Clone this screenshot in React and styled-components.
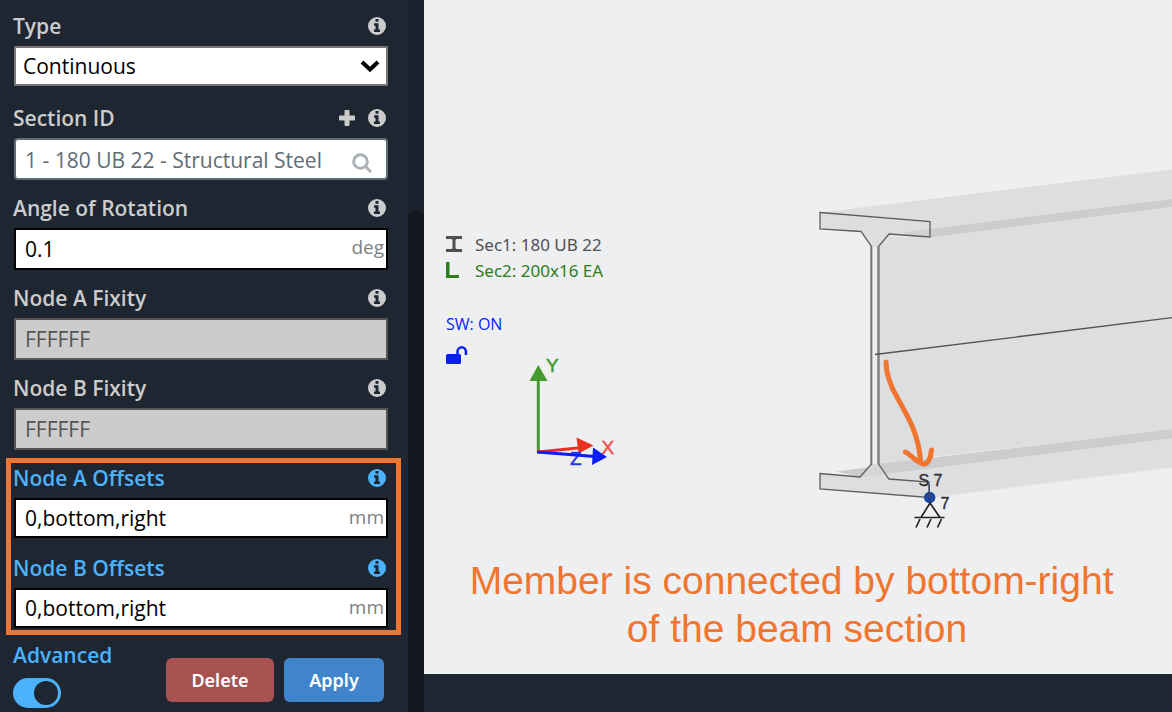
import { useState } from "react";
import styled, { createGlobalStyle } from "styled-components";

export default function App() {
  const [advanced, setAdvanced] = useState(true);

  return (
    <>
      <GlobalStyle />
      <Page>
        <Sidebar>
          <Form onSubmit={(e) => e.preventDefault()}>
            <Field $tall>
              <FieldHeader>
                <Label htmlFor="type">Type</Label>
                <InfoButton name="Type" />
              </FieldHeader>
              <Control>
                <Select id="type" defaultValue="Continuous">
                  <option>Continuous</option>
                  <option>Cable</option>
                  <option>Rigid</option>
                </Select>
                <SelectArrow viewBox="0 0 20 14" aria-hidden="true">
                  <path d="M2 3l8 7.5L18 3" />
                </SelectArrow>
              </Control>
            </Field>

            <Field>
              <FieldHeader>
                <Label htmlFor="section">Section ID</Label>
                <Actions>
                  <IconButton type="button" aria-label="Add section">
                    <Icon viewBox="0 0 18 18">
                      <path d="M7.5 1h3q1 0 1 1v4.500H16q1 0 1 1v3q0 1-1 1h-4.500V16q0 1-1 1h-3q-1 0-1-1v-4.500H2q-1 0-1-1v-3q0-1 1-1h4.500V2q0-1 1-1z" />
                    </Icon>
                  </IconButton>
                  <InfoButton name="Section ID" />
                </Actions>
              </FieldHeader>
              <Control>
                <SearchInput
                  id="section"
                  defaultValue="1 - 180 UB 22 - Structural Steel"
                />
                <SearchIcon viewBox="0 0 20 20" aria-hidden="true">
                  <circle cx="8.500" cy="8.500" r="6.800" />
                  <path d="M13.500 13.500L19 19" />
                </SearchIcon>
              </Control>
            </Field>

            <TextField id="angle" label="Angle of Rotation" value="0.1" unit="deg" />
            <TextField id="fixityA" label="Node A Fixity" value="FFFFFF" disabled />
            <TextField id="fixityB" label="Node B Fixity" value="FFFFFF" disabled />

            <Highlight>
              <TextField id="offsetA" label="Node A Offsets" value="0,bottom,right" unit="mm" active />
              <TextField id="offsetB" label="Node B Offsets" value="0,bottom,right" unit="mm" active />
            </Highlight>

            <FormFooter>
              <Advanced>
                <Label htmlFor="advanced" $active>Advanced</Label>
                <Toggle
                  id="advanced"
                  type="checkbox"
                  checked={advanced}
                  onChange={() => setAdvanced(!advanced)}
                />
              </Advanced>
              <Buttons>
                <DeleteButton type="button">Delete</DeleteButton>
                <ApplyButton type="submit">Apply</ApplyButton>
              </Buttons>
            </FormFooter>
          </Form>
          <ScrollTrack>
            <ScrollThumb />
          </ScrollTrack>
        </Sidebar>

        <Main>
          <Viewport>
            <Model />
            <Legend>
              <LegendRow>
                <LegendIcon viewBox="0 0 16 16">
                  <path d="M0 0h16v3h-5q-1.500 0-1.500 1.500v7q0 1.500 1.500 1.500h5v3H0v-3h5q1.500 0 1.500-1.500v-7Q6.500 3 5 3H0z" />
                </LegendIcon>
                Sec1: 180 UB 22
              </LegendRow>
              <LegendRow $color="#2f7d1b">
                <LegendIcon viewBox="0 0 16 16">
                  <path d="M0 0h3.500v13H13v3H0z" />
                </LegendIcon>
                Sec2: 200x16 EA
              </LegendRow>
            </Legend>
            <SelfWeight>
              SW: ON
              <LockIcon viewBox="0 0 22 18">
                <rect x="0" y="8" width="15" height="10" rx="1.500" />
                <path d="M11.500 9V5.500a4.200 4.200 0 0 1 8.400 0V9" />
              </LockIcon>
            </SelfWeight>
            <Caption>
              Member is connected by bottom-right&nbsp;
              <br />
              of the beam section
            </Caption>
          </Viewport>
          <BottomBar />
        </Main>
      </Page>
    </>
  );
}

function InfoButton({ name, active }) {
  return (
    <IconButton type="button" aria-label={`About ${name}`} $active={active}>
      <Icon viewBox="0 0 18 18">
        <path
          fillRule="evenodd"
          d="M9 0a9 9 0 1 0 0 18A9 9 0 1 0 9 0zM7.500 2h3v2.700h-3zM6 6.300h4.500v6.200H12v2.500H6v-2.500h1.500V8.800H6z"
        />
      </Icon>
    </IconButton>
  );
}

function TextField({ id, label, value, unit, disabled, active }) {
  return (
    <Field>
      <FieldHeader>
        <Label htmlFor={id} $active={active}>{label}</Label>
        <InfoButton name={label} active={active} />
      </FieldHeader>
      <Control>
        <Input id={id} defaultValue={value} disabled={disabled} $short={active} />
        {unit && <Unit>{unit}</Unit>}
      </Control>
    </Field>
  );
}

// 3D view: beam, support, offset arrow and axes
function Model() {
  return (
    <Drawing viewBox="424 0 748 674" role="img" aria-label="Beam model">
      {/* faces */}
      <g fill="#dddee0">
        <path d="M820 212.500L1172 169.500V199L930 229.500V221.500z" />
        <path d="M820 212.500L930 221.500V237L889 234L879 247H871L861 231.500L820 229z" />
        <path d="M879 236L930 237L1172 206V429.500L930 457L879 465z" />
        <path d="M820 473.500L860 477L930 468L1172 438V467.500L929 498L820 489z" />
      </g>
      <g fill="#cccdcf">
        <path d="M930 229L1172 199V206.700L930 237.500z" />
        <path d="M836 471.500L871 467L878 464L1172 429.300V438.300L889 473.500L860 477z" />
      </g>
      <path d="M905 232L930 229V237L905 235.500z" fill="#d0d1d3" />
      <path d="M871 464L878 464L886 474L862 477z" fill="#d6d7d9" />

      {/* section outline */}
      <path
        d="M820 212.500L930 221.500V237L889 234L878.500 246.500V464L889 479L929 482V497.500L820 489V473.500L860 477L871.500 464V246.500L861 231.500L820 229z"
        fill="none"
        stroke="#5c5e60"
        strokeWidth="1.300"
      />
      <path d="M878.500 246V464" stroke="#86888a" strokeWidth="2.600" />
      <path d="M871.300 246V464" stroke="#717375" strokeWidth="1.800" />
      <path d="M875 354.500L1172 317.700" stroke="#505254" strokeWidth="1.300" />

      {/* support */}
      <circle cx="929.700" cy="497.500" r="5.700" fill="#1c459c" />
      <path d="M929.300 484V497" stroke="#3c4b69" strokeWidth="1.300" />
      <g fill="none" stroke="#222" strokeWidth="1.700">
        <path d="M921 517.500L930 503L940 517.500M914.500 517.500H944.500" />
        <path d="M920 519L916 527.500M931 519L927 527.500M941.500 519L937.500 527.500" />
      </g>
      <g fill="#333" stroke="#333" strokeWidth="0.400" fontFamily="Liberation Sans, Arial, sans-serif" fontSize="16">
        <text x="918.500" y="486">S 7</text>
        <text x="940.500" y="508.500">7</text>
      </g>

      {/* offset arrow */}
      <g fill="none" stroke="#f0752f" strokeWidth="5" strokeLinecap="round" strokeLinejoin="round">
        <path d="M886 362C886 376 891 387 898 399C906 413 919 434 920.500 461" />
        <path d="M905.500 452C911 455 914 460 922 463.500C928 466 931 457 931.500 450" />
      </g>

      {/* axes */}
      <g fontFamily="Liberation Sans, Arial, sans-serif" fontSize="19">
        <path d="M538.300 452V378" stroke="#459a2e" strokeWidth="3" />
        <path d="M538.300 365L529.500 381H547.500z" fill="#459a2e" />
        <text x="546" y="372" fill="#459a2e" stroke="#459a2e" strokeWidth="0.500">Y</text>
        <path d="M538 452L580 447.700" stroke="#ea3323" strokeWidth="3" />
        <path d="M593.500 445.500L576.500 437.500L578.500 453.500z" fill="#ea3323" />
        <text x="601.500" y="454" fill="#ef5350" stroke="#ef5350" strokeWidth="0.500">X</text>
        <text x="570" y="465" fill="#2337f0" stroke="#2337f0" strokeWidth="0.500">Z</text>
        <path d="M537 452L595 456.500" stroke="#0a1ef5" strokeWidth="3" />
        <path d="M607 457L593 447.500L592 465z" fill="#0a1ef5" />
      </g>
    </Drawing>
  );
}

const GlobalStyle = createGlobalStyle`
  * {
    box-sizing: border-box;
  }
  body {
    margin: 0;
    background-color: #1e2632;
    font-family: "Open Sans", "Noto Sans", sans-serif;
  }
  input, select, button {
    font-family: inherit;
  }
`;

const Page = styled.div`
  display: flex;
  min-height: 100vh;
`;

const Sidebar = styled.aside`
  display: flex;
  flex: 0 0 424px;
  background-color: #1e2632;
`;

const Form = styled.form`
  flex: 1;
  padding: 6px 20px 4px 13px;
`;

const Field = styled.div`
  height: ${(props) => (props.$tall ? "92px" : "90px")};
`;

const FieldHeader = styled.div`
  height: 40px;
  display: flex;
  justify-content: space-between;
  align-items: center;
  padding-right: 2px;
`;

const Label = styled.label`
  font-size: 21px;
  line-height: 34px;
  font-weight: 600;
  color: ${(props) => (props.$active ? "#4cb2fb" : "#cccccc")};
`;

const Actions = styled.div`
  display: flex;
  gap: 12px;
`;

const IconButton = styled.button`
  display: flex;
  padding: 0;
  border: none;
  background: none;
  color: ${(props) => (props.$active ? "#4cb2fb" : "#cccccc")};
  cursor: pointer;
`;

const Icon = styled.svg`
  width: 18px;
  height: 18px;
  fill: currentColor;
`;

const Control = styled.div`
  position: relative;
  margin-left: 1px;
`;

const Select = styled.select`
  display: block;
  width: 100%;
  height: 40px;
  padding: 0 40px 0 7px;
  appearance: none;
  border: 2px solid #767676;
  border-radius: 1px;
  background-color: white;
  color: black;
  font-size: 21px;
`;

const SelectArrow = styled.svg`
  position: absolute;
  right: 8px;
  top: 13px;
  width: 20px;
  height: 14px;
  fill: none;
  stroke: black;
  stroke-width: 4;
  pointer-events: none;
`;

const Input = styled.input`
  display: block;
  width: 100%;
  height: ${(props) => (props.$short ? "40px" : "42px")};
  padding: 0 50px 0 9px;
  border: 2px solid black;
  background-color: white;
  color: black;
  font-size: 21px;

  &:disabled {
    border-color: #555555;
    background-color: #cccccc;
    color: #555555;
  }
`;

const SearchInput = styled(Input)`
  border-color: #5f6d76;
  border-radius: 4px;
  color: #5f6d76;
  padding-top: 2px;
`;

const SearchIcon = styled.svg`
  position: absolute;
  right: 16px;
  top: 15px;
  width: 20px;
  height: 20px;
  fill: none;
  stroke: #aab2b6;
  stroke-width: 3;
`;

const Unit = styled.span`
  position: absolute;
  right: 4px;
  top: 4px;
  font-size: 19px;
  line-height: 30px;
  color: #808080;
`;

const Highlight = styled.div`
  position: relative;

  &::after {
    content: "";
    position: absolute;
    top: 0;
    right: -13px;
    bottom: 3px;
    left: -7px;
    border: 5px solid #f0752f;
    pointer-events: none;
  }
`;

const FormFooter = styled.div`
  display: flex;
  justify-content: space-between;
  align-items: flex-start;
`;

const Advanced = styled.div`
  display: flex;
  flex-direction: column;
  gap: 6px;
`;

const Toggle = styled.input`
  appearance: none;
  width: 48px;
  height: 30px;
  margin: 0;
  padding: 3px;
  display: flex;
  justify-content: flex-start;
  border-radius: 15px;
  background-color: #8a929c;
  cursor: pointer;

  &::before {
    content: "";
    width: 24px;
    height: 24px;
    border-radius: 50%;
    background-color: #1e2632;
  }

  &:checked {
    justify-content: flex-end;
    background-color: #4cb2fb;
  }
`;

const Buttons = styled.div`
  display: flex;
  gap: 10px;
  padding: 20px 4px 0 0;
`;

const Button = styled.button`
  height: 44px;
  border: none;
  border-radius: 6px;
  padding-bottom: 2px;
  color: white;
  font-family: "Noto Sans", "Open Sans", sans-serif;
  font-size: 18px;
  font-weight: 600;
  cursor: pointer;
`;

const DeleteButton = styled(Button)`
  width: 108px;
  background-color: #a55250;
`;

const ApplyButton = styled(Button)`
  width: 100px;
  background-color: #4085cb;
`;

const ScrollTrack = styled.div`
  width: 16px;
  padding-top: 210px;
  display: flex;
  background-color: #1b222d;
`;

const ScrollThumb = styled.div`
  flex: 1;
  border-radius: 8px 8px 0 0;
  background-color: #141920;
`;

const Main = styled.main`
  flex: 1;
  display: flex;
  flex-direction: column;
`;

const Viewport = styled.section`
  position: relative;
  flex: 1;
  display: flex;
  flex-direction: column;
  padding: 232px 0 21px;
  overflow: hidden;
  background-color: #eeeff1;
`;

const Drawing = styled.svg`
  position: absolute;
  top: 0;
  left: 0;
  width: 748px;
  height: 674px;
`;

const Legend = styled.div`
  padding-left: 22px;
`;

const LegendRow = styled.div`
  display: flex;
  align-items: center;
  gap: 13px;
  font-family: "Noto Sans", "Open Sans", sans-serif;
  font-size: 17px;
  line-height: 26px;
  color: ${(props) => props.$color || "#4f5052"};
`;

const LegendIcon = styled.svg`
  width: 16px;
  height: 16px;
  margin-bottom: 2px;
  fill: currentColor;
`;

const SelfWeight = styled.div`
  display: flex;
  flex-direction: column;
  gap: 10px;
  padding: 28px 0 0 22px;
  font-size: 16px;
  line-height: 24px;
  color: #0a1ef5;
`;

const LockIcon = styled.svg`
  width: 22px;
  height: 18px;
  fill: currentColor;

  path {
    fill: none;
    stroke: currentColor;
    stroke-width: 2.5;
  }
`;

const Caption = styled.p`
  margin: auto 0 0;
  padding-right: 2px;
  font-family: "Liberation Sans", Arial, sans-serif;
  font-size: 39px;
  line-height: 48px;
  text-align: center;
  color: #f0752f;
`;

const BottomBar = styled.footer`
  height: 38px;
  background-color: #1e2632;
`;
